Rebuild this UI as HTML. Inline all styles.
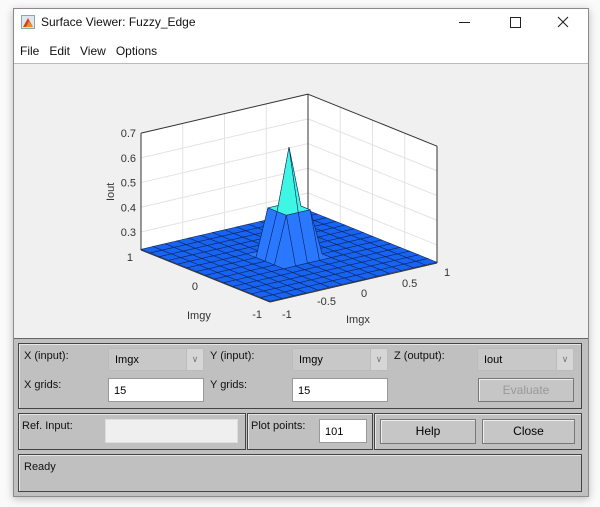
<!DOCTYPE html>
<html><head><meta charset="utf-8"><style>
body{margin:0;width:600px;height:507px;background:#fafafa;font-family:"Liberation Sans",sans-serif;position:relative;overflow:hidden}
.a{position:absolute}
.win{left:13px;top:8px;width:574px;height:487px;border:1px solid #8a8a8a;background:#f0f0f0;box-shadow:0 2px 8px rgba(0,0,0,.25)}
.t{font-size:11px;color:#111;position:absolute}
.fr{position:absolute;border:1px solid #444;box-shadow:inset 1px 1px 0 #e6e6e6}
.dd{position:absolute;background:#c8c8c8;border:1px solid #bcbcbc;font-size:11px}
.dd span{position:absolute;left:6px;top:5px}
.dd i{position:absolute;right:0;top:0;width:16px;height:100%;background:#d6d6d6;border-left:1px solid #bbb;font-style:normal;font-size:9px;color:#777;text-align:center;line-height:21px}
.in{position:absolute;background:#fff;border:1px solid #999;font-size:11px}
.in span{position:absolute;left:5px;top:6px}
.bt{position:absolute;background:#c6c6c6;border:1px solid #777;box-shadow:inset 1px 1px 0 #eee;font-size:12px;text-align:center;line-height:23px}
</style></head><body>
<div class="a win"></div>
<div class="a" style="left:14px;top:9px;width:574px;height:54px;background:#fff"></div>
<svg class="a" style="left:21px;top:15px" width="14" height="14"><rect x="0.5" y="0.5" width="13" height="13" fill="#dfe6ef" stroke="#8aa"/><path d="M2 12 L7 3 L12 12 Z" fill="#d8401a"/><path d="M5 12 L8 6 L12 12Z" fill="#f08a30"/></svg>
<div class="a" style="left:41px;top:15px;font-size:12px;color:#111">Surface Viewer: Fuzzy_Edge</div>
<div class="a" style="left:459px;top:22px;width:11px;height:1px;background:#222"></div>
<div class="a" style="left:510px;top:17px;width:9px;height:9px;border:1px solid #222"></div>
<svg class="a" style="left:557px;top:16px" width="12" height="12"><path d="M1 1L11 11M11 1L1 11" stroke="#222" stroke-width="1.1"/></svg>
<div class="a" style="left:20px;top:44px;font-size:12px;color:#111;word-spacing:0">File&nbsp;&nbsp;&nbsp;Edit&nbsp;&nbsp;&nbsp;View&nbsp;&nbsp;&nbsp;Options</div>
<div class="a" style="left:14px;top:63px;width:574px;height:1px;background:#bbb"></div>
<svg id="plot" class="a" style="left:0;top:0" width="600" height="340" font-family="Liberation Sans" font-size="11" fill="#333"></svg>
<div class="a" style="left:14px;top:338px;width:574px;height:157px;background:#c0c0c0;border-top:1px solid #666"></div>
<div class="fr" style="left:18px;top:343px;width:562px;height:64px"></div>
<div class="fr" style="left:18px;top:413px;width:226px;height:35px"></div>
<div class="fr" style="left:247px;top:413px;width:124px;height:35px"></div>
<div class="fr" style="left:374px;top:413px;width:206px;height:35px"></div>
<div class="fr" style="left:18px;top:454px;width:562px;height:36px"></div>
<div class="t" style="left:24px;top:350px">X (input):</div>
<div class="t" style="left:210px;top:350px">Y (input):</div>
<div class="t" style="left:394px;top:350px">Z (output):</div>
<div class="t" style="left:24px;top:379px">X grids:</div>
<div class="t" style="left:210px;top:379px">Y grids:</div>
<div class="t" style="left:22px;top:420px">Ref. Input:</div>
<div class="t" style="left:251px;top:420px">Plot points:</div>
<div class="t" style="left:24px;top:461px">Ready</div>
<div class="dd" style="left:108px;top:348px;width:94px;height:21px"><span>Imgx</span><i>&#8744;</i></div>
<div class="dd" style="left:292px;top:348px;width:94px;height:21px"><span>Imgy</span><i>&#8744;</i></div>
<div class="dd" style="left:477px;top:348px;width:95px;height:21px"><span>Iout</span><i>&#8744;</i></div>
<div class="in" style="left:108px;top:378px;width:94px;height:22px"><span>15</span></div>
<div class="in" style="left:292px;top:378px;width:94px;height:22px"><span>15</span></div>
<div class="bt" style="left:478px;top:378px;width:94px;height:22px;color:#999">Evaluate</div>
<div class="in" style="left:105px;top:419px;width:131px;height:22px;background:#efefef;border-color:#ddd"></div>
<div class="in" style="left:319px;top:419px;width:46px;height:22px"><span>101</span></div>
<div class="bt" style="left:380px;top:419px;width:94px;height:23px">Help</div>
<div class="bt" style="left:482px;top:419px;width:91px;height:23px">Close</div>
<script>
var s=document.getElementById('plot'),h='';
var D=[270,302],CX=[167,-39],AY=[-129,-52],K=247,Z0=0.227;
function P(x,y,z){return [D[0]+(x+1)/2*CX[0]+(y+1)/2*AY[0], D[1]+(x+1)/2*CX[1]+(y+1)/2*AY[1]-(z-Z0)*K];}
function pt(p){return p[0].toFixed(1)+','+p[1].toFixed(1);}
function L(a,b,c){h+='<line x1="'+a[0]+'" y1="'+a[1]+'" x2="'+b[0]+'" y2="'+b[1]+'" stroke="'+(c||'#e3e3e3')+'" stroke-width="1"/>';}
var A0=P(-1,1,Z0),B0=P(1,1,Z0),C0=P(1,-1,Z0),At=P(-1,1,.7),Bt=P(1,1,.7),Ct=P(1,-1,.7);
h+='<polygon points="'+[A0,B0,Bt,At].map(pt).join(' ')+'" fill="#fff"/>';
h+='<polygon points="'+[B0,C0,Ct,Bt].map(pt).join(' ')+'" fill="#fff"/>';
for(var z=.3;z<.71;z+=.1){L(P(-1,1,z),P(1,1,z));L(P(1,1,z),P(1,-1,z));}
for(var v=-.5;v<.6;v+=.5){L(P(v,1,Z0),P(v,1,.7));L(P(1,v,Z0),P(1,v,.7));}
L(At,Bt,'#333');L(Bt,Ct,'#333');L(A0,At,'#333');L(B0,Bt,'#333');L(C0,Ct,'#333');
var N=15;
function f(i,j){var d=Math.max(Math.abs(i-7),Math.abs(j-7));if(d==0)return .67;if(d==1)return .42;return Z0+0.003;}
var cells=[];
for(var i=0;i<N-1;i++)for(var j=0;j<N-1;j++)cells.push([i,j]);
cells.sort(function(a,b){return (b[0]+b[1])-(a[0]+a[1]);});
cells.forEach(function(c){var i=c[0],j=c[1];
 var q=[[i,j],[i+1,j],[i+1,j+1],[i,j+1]];
 var zs=q.map(function(k){return f(k[0],k[1]);});
 var mx=Math.max.apply(null,zs), m=(zs[0]+zs[1]+zs[2]+zs[3])/4;
 var col=mx>0.6?'#3ff5e4':(m>0.24?'#2a78ff':'#1763f2');
 var pts=q.map(function(k,n){return pt(P(-1+2*k[0]/14,-1+2*k[1]/14,zs[n]));}).join(' ');
 h+='<polygon points="'+pts+'" fill="'+col+'" stroke="#0d2456" stroke-width="0.55"/>';
});
L(A0,P(-1,-1,Z0),'#333');L(P(-1,-1,Z0),C0,'#333');
var T=function(x,y,t,a){h+='<text x="'+x+'" y="'+y+'" text-anchor="'+(a||'start')+'">'+t+'</text>';};
[.7,.6,.5,.4,.3].forEach(function(z){var p=P(-1,1,z);T(p[0]-5,p[1]+4,z.toFixed(1),'end');});
T(133,261,'1','end');T(198,290,'0','end');T(262,318,'-1','end');
T(282,318,'-1');T(317,305,'-0.5');T(361,297,'0');T(402,287,'0.5');T(444,276,'1');
T(187,319,'Imgy');T(346,323,'Imgx');
h+='<text transform="translate(114,201) rotate(-90)">Iout</text>';
s.innerHTML=h;
</script>
</body></html>
